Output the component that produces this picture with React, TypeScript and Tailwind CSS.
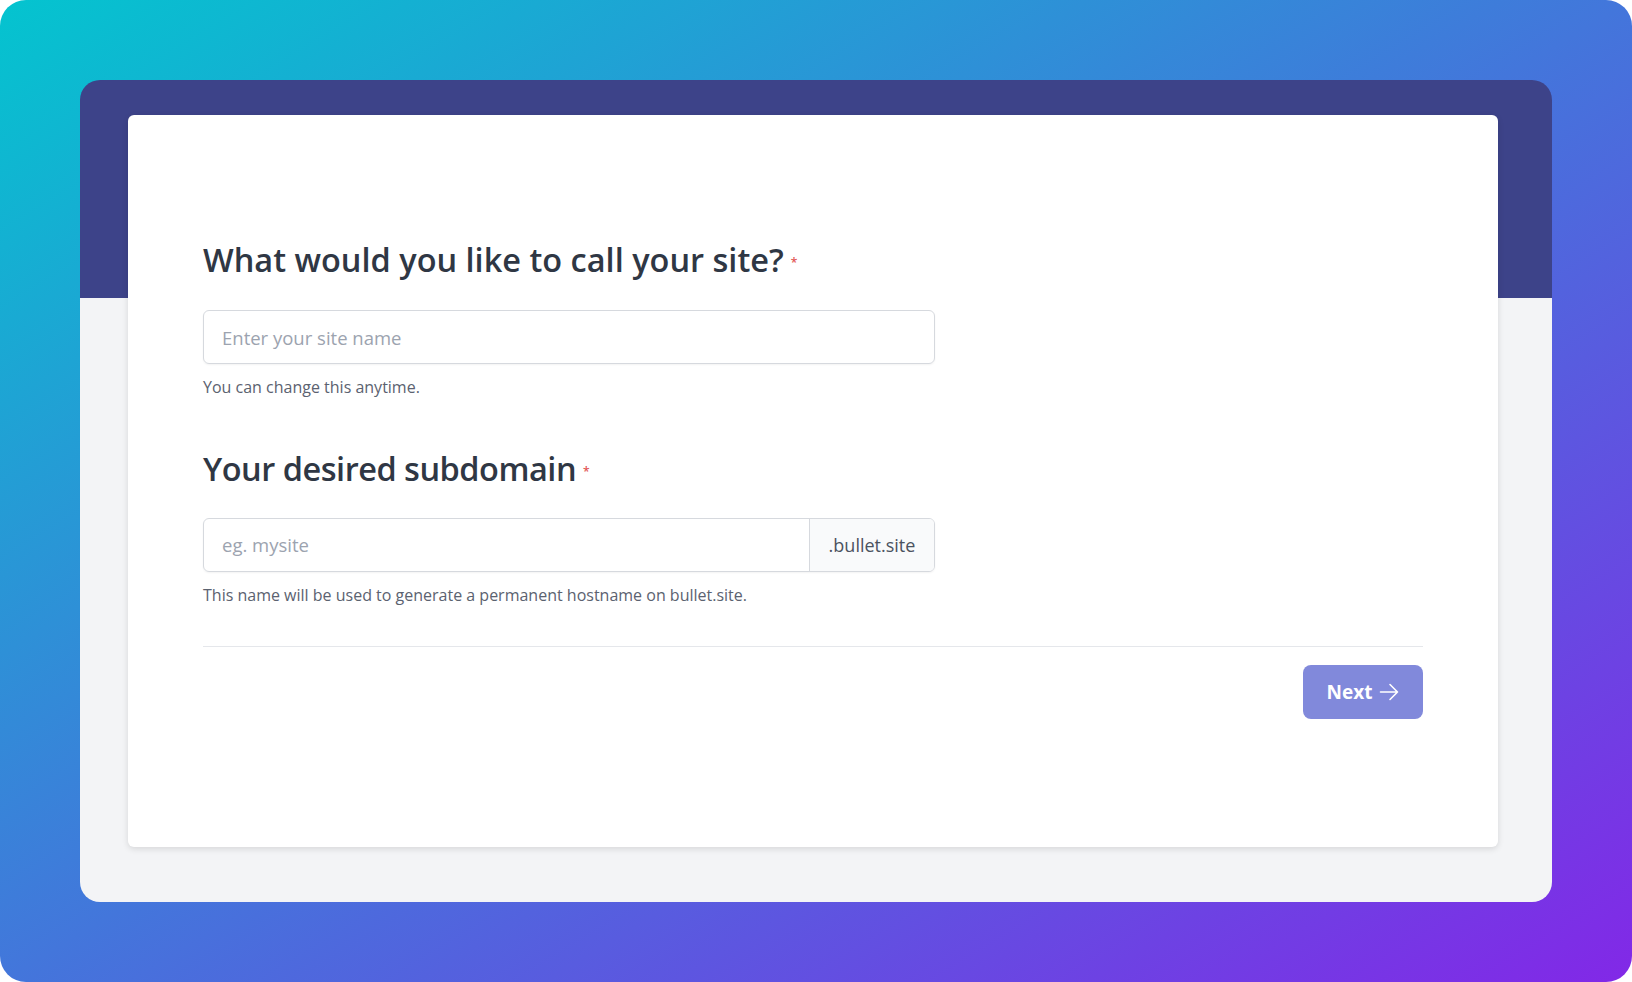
export default function App() {
  return (
    <div className="w-[1632px] h-[982px] bg-white font-['Open_Sans',sans-serif]">
      {/* ── Gradient backdrop ───────────────────────────────────────── */}
      <div className="w-full h-full rounded-[26px] bg-[linear-gradient(to_bottom_right,#04c4cf,#8228e7)] p-20">
        {/* ── App frame ─────────────────────────────────────────────── */}
        <div className="w-[1472px] h-[822px] rounded-[20px] overflow-hidden bg-[linear-gradient(to_bottom,#3d4389_218px,#f3f4f6_218px)] pt-[35px] pl-12">
          {/* ── Card ────────────────────────────────────────────────── */}
          <div className="w-[1370px] h-[732px] bg-white rounded-md shadow-[0_2px_6px_rgba(0,0,0,0.12)] px-[75px] pt-[125px]">
            <h2 className="flex items-center gap-[7px] text-[32.5px] leading-10 font-semibold text-[#2f3744]">
              What would you like to call your site?
              <span className="text-[#e25555] text-[12px] leading-none translate-y-[3px]">*</span>
            </h2>
            <input
              type="text"
              placeholder="Enter your site name"
              className="mt-[30px] block w-[732px] h-[54px] rounded-md border border-[#d6d9de] px-[18px] text-[18.5px] text-gray-700 placeholder:text-[#9ca3af] shadow-[0_1px_2px_rgba(0,0,0,0.05)] outline-none"
            />
            <p className="mt-[13px] text-[16px] leading-5 text-[#5b6270]">You can change this anytime.</p>

            <h2 className="mt-[52px] flex items-center gap-[7px] text-[32.5px] leading-10 font-semibold text-[#2f3744] tracking-[-0.015em]">
              Your desired subdomain
              <span className="text-[#e25555] text-[12px] leading-none translate-y-[3px]">*</span>
            </h2>
            <div className="mt-[29px] flex w-[732px] h-[54px] rounded-md border border-[#d6d9de] overflow-hidden shadow-[0_1px_2px_rgba(0,0,0,0.05)]">
              <input
                type="text"
                placeholder="eg. mysite"
                className="flex-1 min-w-0 px-[18px] text-[18.5px] text-gray-700 placeholder:text-[#9ca3af] outline-none"
              />
              <span className="flex w-[125px] items-center justify-center border-l border-[#d6d9de] bg-[#f9fafb] text-[18px] text-[#4b5260]">
                .bullet.site
              </span>
            </div>
            <p className="mt-[13px] text-[16px] leading-5 text-[#5b6270]">
              This name will be used to generate a permanent hostname on bullet.site.
            </p>

            <div className="mt-[41px] border-t border-[#e5e7eb]" />
            <div className="mt-[18px] flex justify-end">
              <button className="flex items-center justify-center gap-[7px] w-[120px] h-[54px] rounded-lg bg-[#8189db] text-white text-[19px] font-bold">
                Next
                <svg width="20" height="18" viewBox="0 0 20 18" fill="none" stroke="currentColor" strokeWidth="1.6" strokeLinecap="round" strokeLinejoin="round">
                  <path d="M1.5 9h17M11 1.5L18.5 9 11 16.5" />
                </svg>
              </button>
            </div>
          </div>
        </div>
      </div>
    </div>
  );
}
